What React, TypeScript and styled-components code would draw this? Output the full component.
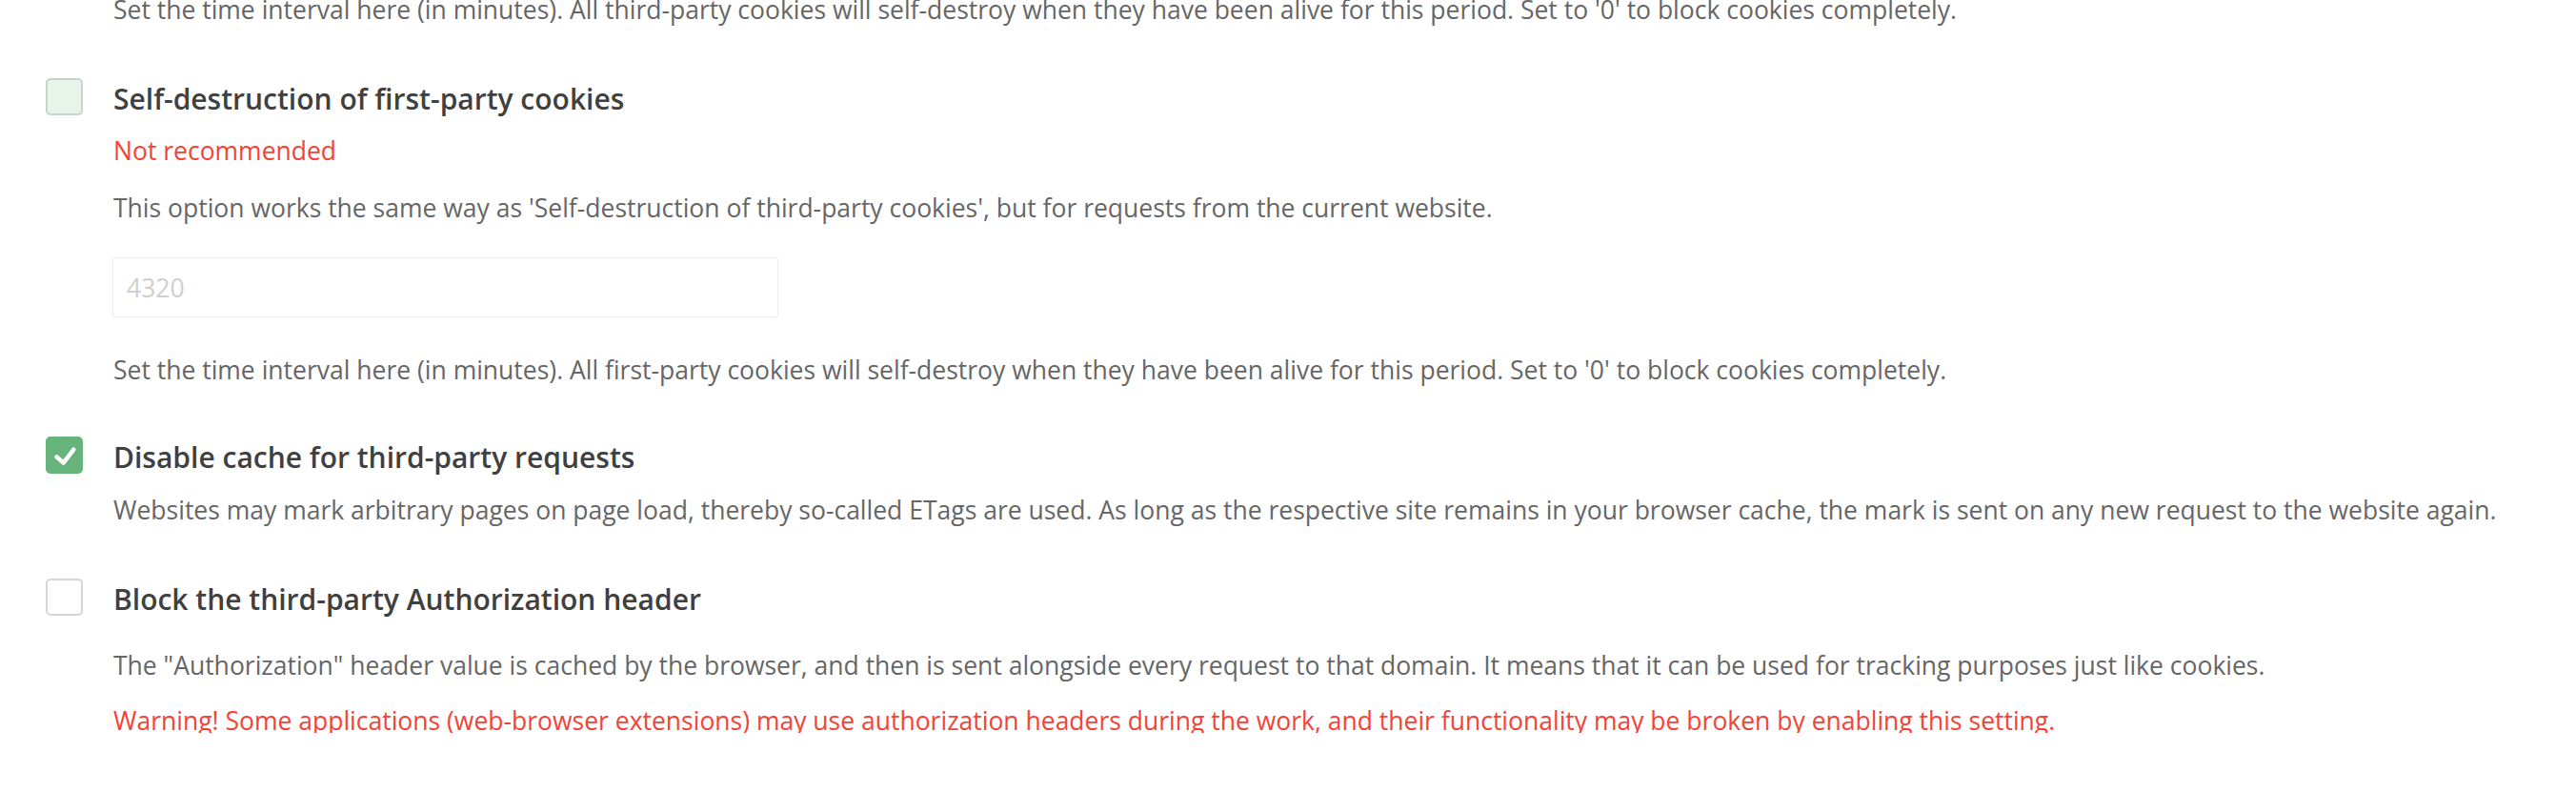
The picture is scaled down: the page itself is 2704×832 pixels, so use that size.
import React from 'react';
import styled, { createGlobalStyle } from 'styled-components';

const GlobalStyle = createGlobalStyle`
  html, body {
    margin: 0;
    padding: 0;
    background: #fff;
  }
  body {
    font-family: "Open Sans", "Noto Sans", sans-serif;
    -webkit-font-smoothing: antialiased;
  }
`;

const Page = styled.div`
  display: flex;
  flex-direction: column;
  margin-top: -3px;
  padding-left: 48px;
`;

const Item = styled.section<{ $gap: number }>`
  display: flex;
  flex-direction: column;
  margin-top: ${(p) => p.$gap}px;
`;

const Head = styled.label`
  display: flex;
  align-items: flex-start;
  gap: 32px;
  cursor: pointer;
`;

type BoxState = 'checked' | 'focus' | 'empty';

const Box = styled.span<{ $state: BoxState }>`
  flex: 0 0 auto;
  box-sizing: border-box;
  width: 39px;
  height: 39px;
  border-radius: 5px;
  display: flex;
  align-items: center;
  justify-content: center;
  border: 2px solid
    ${(p) => (p.$state === 'checked' ? '#66b47c' : p.$state === 'focus' ? '#c6d4c9' : '#d6d6d6')};
  background: ${(p) => (p.$state === 'checked' ? '#66b47c' : p.$state === 'focus' ? '#e8f3ea' : '#fff')};
`;

const Title = styled.span`
  font-size: 30px;
  line-height: 39px;
  padding-top: 2px;
  font-weight: 600;
  color: #404040;
  white-space: nowrap;
`;

const Body = styled.div`
  display: flex;
  flex-direction: column;
  align-items: flex-start;
  padding-left: 71px;
`;

const Text = styled.p<{ $gap?: number; $warn?: boolean }>`
  margin: ${(p) => p.$gap ?? 0}px 0 0;
  font-size: 26.5px;
  line-height: 26px;
  color: ${(p) => (p.$warn ? '#f44336' : '#666')};
  white-space: nowrap;
`;

const Field = styled.input<{ $gap: number }>`
  box-sizing: border-box;
  margin: ${(p) => p.$gap}px 0 0 -1px;
  width: 699px;
  height: 63px;
  padding: 0 14px;
  border: 1px solid #ececec;
  border-radius: 2px;
  background: #fff;
  font-family: inherit;
  font-size: 26.5px;
  color: #666;
  outline: none;
  &::placeholder {
    color: #cfcfcf;
  }
`;

const Check = () => (
  <svg width="39" height="39" viewBox="0 0 39 39">
    <path d="M10.5 21.5 L18.5 28.5 L30.5 13" fill="none" stroke="#fff" strokeWidth="5" strokeLinecap="round" strokeLinejoin="round" />
  </svg>
);

const Checkbox = ({ state }: { state: BoxState }) => (
  <Box $state={state}>{state === 'checked' && <Check />}</Box>
);

export default function App() {
  return (
    <>
      <GlobalStyle />
      <Page>
        <Body>
          <Text>
            Set the time interval here (in minutes). All third-party cookies will self-destroy when they have been alive for this period. Set to '0' to block cookies completely.
          </Text>
        </Body>

        <Item $gap={59}>
          <Head>
            <Checkbox state="focus" />
            <Title>Self-destruction of first-party cookies</Title>
          </Head>
          <Body>
            <Text $gap={22} $warn>
              Not recommended
            </Text>
            <Text $gap={34}>
              This option works the same way as 'Self-destruction of third-party cookies', but for requests from the current website.
            </Text>
            <Field $gap={39} placeholder="4320" />
            <Text $gap={42}>
              Set the time interval here (in minutes). All first-party cookies will self-destroy when they have been alive for this period. Set to '0' to block cookies completely.
            </Text>
          </Body>
        </Item>

        <Item $gap={57}>
          <Head>
            <Checkbox state="checked" />
            <Title>Disable cache for third-party requests</Title>
          </Head>
          <Body>
            <Text $gap={23}>
              Websites may mark arbitrary pages on page load, thereby so-called ETags are used. As long as the respective site remains in your browser cache, the mark is sent on any new request to the website again.
            </Text>
          </Body>
        </Item>

        <Item $gap={59}>
          <Head>
            <Checkbox state="empty" />
            <Title>Block the third-party Authorization header</Title>
          </Head>
          <Body>
            <Text $gap={37}>
              The "Authorization" header value is cached by the browser, and then is sent alongside every request to that domain. It means that it can be used for tracking purposes just like cookies.
            </Text>
            <Text $gap={32} $warn>
              Warning! Some applications (web-browser extensions) may use authorization headers during the work, and their functionality may be broken by enabling this setting.
            </Text>
          </Body>
        </Item>
      </Page>
    </>
  );
}
